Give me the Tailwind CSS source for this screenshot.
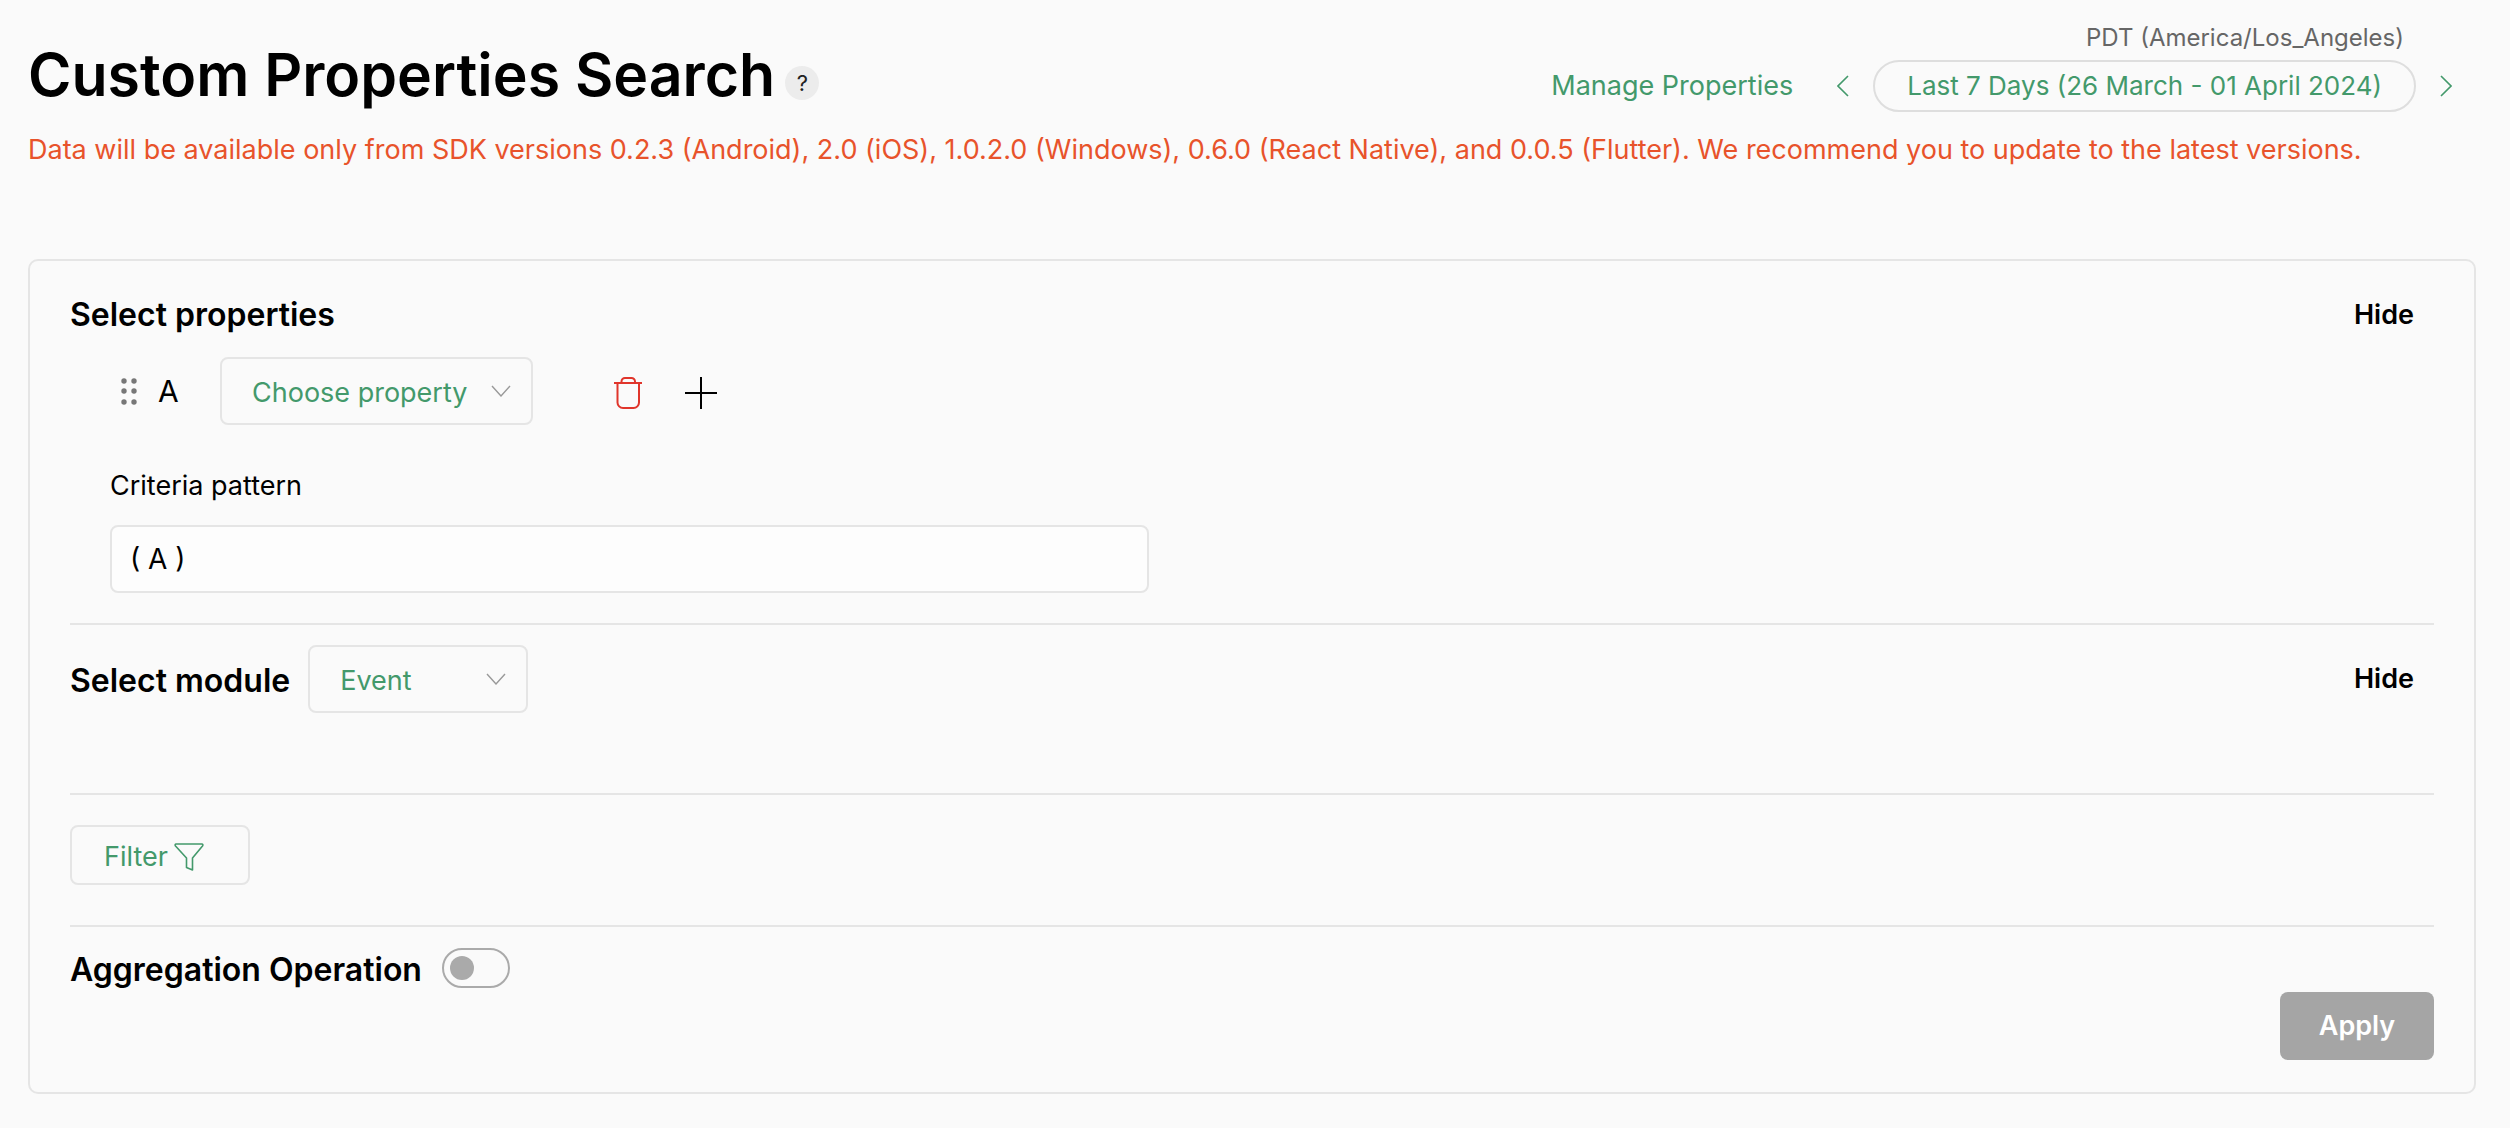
<!DOCTYPE html>
<html lang="en">
<head>
<meta charset="utf-8">
<meta name="viewport" content="width=device-width, initial-scale=1">
<title>Custom Properties Search</title>
<script src="https://cdn.jsdelivr.net/npm/@tailwindcss/browser@4"></script>
</head>
<body class="min-h-screen bg-[#fafafa] pt-[22px] pr-[34px] pb-[34px] pl-7 font-['Inter',sans-serif] text-[27px] leading-9 text-black">

<header class="flex items-start justify-between">
  <div class="mt-[17px] flex items-center gap-[10px]">
    <h1 class="text-[59px] leading-[72px] font-semibold whitespace-nowrap">Custom Properties Search</h1>
    <button type="button" aria-label="Help" class="mt-4 flex size-[34px] items-center justify-center rounded-full bg-[#ececec] text-[22px] leading-none text-[#222]">?</button>
  </div>
  <div class="flex flex-col">
    <p class="mr-[72px] self-end text-2xl leading-8 text-[#666]">PDT (America/Los_Angeles)</p>
    <div class="mt-1.5 mr-6 flex h-[52px] items-center whitespace-nowrap text-[#43996b]">
      <a href="#" class="mr-11">Manage Properties</a>
      <button type="button" aria-label="Previous period" class="mr-6">
        <svg class="h-[22px] w-3" viewBox="0 0 12 22" fill="none" stroke="currentColor" stroke-width="1.6"><path d="M11 1 1 11l10 10"/></svg>
      </button>
      <button type="button" class="h-[52px] rounded-full border-2 border-[#dedede] px-8 text-[26px]">Last 7 Days (26 March - 01 April 2024)</button>
      <button type="button" aria-label="Next period" class="ml-6">
        <svg class="h-[22px] w-3" viewBox="0 0 12 22" fill="none" stroke="currentColor" stroke-width="1.6"><path d="m1 1 10 10L1 21"/></svg>
      </button>
    </div>
  </div>
</header>

<p class="mt-5 text-[#e8532b]">Data will be available only from SDK versions 0.2.3 (Android), 2.0 (iOS), 1.0.2.0 (Windows), 0.6.0 (React Native), and 0.0.5 (Flutter). We recommend you to update to the latest versions.</p>

<main class="mt-[91px] rounded-[10px] border-2 border-[#e5e5e5] px-10 pt-[34px] pb-8">

  <section class="border-b-2 border-[#e5e5e5] pb-[30px]">
    <div class="flex items-center justify-between">
      <h2 class="text-[32px] leading-10 font-semibold">Select properties</h2>
      <button type="button" class="mr-5 font-semibold">Hide</button>
    </div>
    <div class="mt-[22px] flex h-[68px] items-center pl-[51px]">
      <svg class="h-[27px] w-4 text-[#777]" viewBox="0 0 16 27" fill="currentColor"><circle cx="3" cy="3" r="2.7"/><circle cx="13" cy="3" r="2.7"/><circle cx="3" cy="13" r="2.7"/><circle cx="13" cy="13" r="2.7"/><circle cx="3" cy="24" r="2.7"/><circle cx="13" cy="24" r="2.7"/></svg>
      <label for="property" class="ml-[21px] w-[62px] text-[30px]">A</label>
      <div class="relative">
        <select id="property" class="h-[68px] w-[313px] appearance-none rounded-lg border-2 border-[#e5e5e5] pt-1 pl-[30px] text-[#43996b]"><option>Choose property</option></select>
        <svg class="pointer-events-none absolute top-7 right-[22px] h-3 w-5 text-[#999]" viewBox="0 0 20 12" fill="none" stroke="currentColor" stroke-width="1.4"><path d="m1 1 9 10 9-10"/></svg>
      </div>
      <button type="button" aria-label="Delete property" class="mt-1 ml-20 text-[#e0352b]">
        <svg class="h-8 w-[30px]" viewBox="0 0 30 32" fill="none" stroke="currentColor" stroke-width="2"><path d="M1 6h28M4.500 6v19.500a5.500 5.500 0 0 0 5.500 5.500h10.500a5.500 5.500 0 0 0 5.500-5.500V6M8.500 6V4.500A3.500 3.500 0 0 1 12 1h6.500A3.500 3.500 0 0 1 22 4.500V6"/></svg>
      </button>
      <button type="button" aria-label="Add property" class="mt-1 ml-[42px]">
        <svg class="size-8" viewBox="0 0 32 32" fill="none" stroke="currentColor" stroke-width="2"><path d="M16 0v32M0 16h32"/></svg>
      </button>
    </div>
    <div class="mt-[43px] flex flex-col pl-10">
      <label for="criteria" class="self-start">Criteria pattern</label>
      <input id="criteria" type="text" value="( A )" class="mt-[21px] h-[68px] w-full max-w-[1039px] rounded-lg border-2 border-[#e5e5e5] bg-[#fdfdfd] px-[18px] text-[28px]">
    </div>
  </section>

  <section class="flex items-center justify-between border-b-2 border-[#e5e5e5] pt-5 pb-20">
    <div class="flex items-center gap-[18px]">
      <h2 class="pt-1 text-[32px] leading-10 font-semibold"><label for="module">Select module</label></h2>
      <div class="relative">
        <select id="module" class="h-[68px] w-[220px] appearance-none rounded-lg border-2 border-[#e5e5e5] pt-1 pl-[30px] text-[#43996b]"><option>Event</option></select>
        <svg class="pointer-events-none absolute top-7 right-[22px] h-3 w-5 text-[#999]" viewBox="0 0 20 12" fill="none" stroke="currentColor" stroke-width="1.4"><path d="m1 1 9 10 9-10"/></svg>
      </div>
    </div>
    <button type="button" class="mr-5 font-semibold">Hide</button>
  </section>

  <section class="border-b-2 border-[#e5e5e5] pt-[30px] pb-10">
    <button type="button" class="flex h-[60px] w-[180px] items-center gap-1.5 rounded-lg border-2 border-[#e5e5e5] pt-1 pl-8 text-[#43996b]">Filter
      <svg class="h-7 w-[30px]" viewBox="0 0 30 28" fill="none" stroke="currentColor" stroke-width="1.6" stroke-linejoin="round"><path d="M2 1h26q1.500.500.500 2L18.500 15v12l-6-2.500V15L1.500 3Q.500 1.500 2 1Z"/></svg>
    </button>
  </section>

  <section class="pt-[21px]">
    <div class="flex h-10 items-center gap-5">
      <h2 class="pt-1 text-[32px] leading-10 font-semibold"><label for="aggregation">Aggregation Operation</label></h2>
      <input id="aggregation" type="checkbox" role="switch" class="flex h-10 w-[68px] appearance-none items-center rounded-full border-2 border-[#aaa] pl-1.5 before:size-6 before:rounded-full before:bg-[#aaa] before:content-['']">
    </div>
    <div class="mt-1 flex justify-end">
      <button type="button" class="h-[68px] w-[154px] rounded-lg bg-[#a5a5a5] font-semibold text-white">Apply</button>
    </div>
  </section>
</main>
</body>
</html>
